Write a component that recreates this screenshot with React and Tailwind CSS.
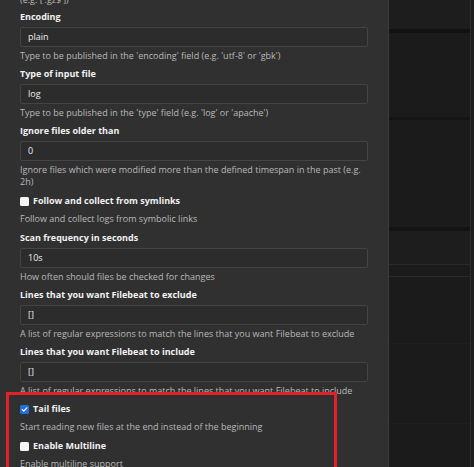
import React from "react";

const font = { fontFamily: '"Open Sans", "Noto Sans", sans-serif' };

function Help({ children, className = "" }) {
  return (
    <div className={"text-[9px] leading-[12px] text-[#b9b9b9] " + className}>
      {children}
    </div>
  );
}

function Field({ label, value, help, className = "mb-[5px]" }) {
  return (
    <div className={className}>
      <div className="text-[9px] leading-[14px] font-bold text-[#f2f2f2] mb-[3px]">{label}</div>
      <div className="h-[20px] rounded-[2px] border border-[#444444] bg-[#2c2c2c] px-[7px] flex items-center text-[9px] text-[#eeeeee]">
        {value}
      </div>
      <Help className="mt-[3px]">{help}</Help>
    </div>
  );
}

function Check({ label, help, checked, className = "" }) {
  return (
    <div className={className}>
      <div className="h-[16px] flex items-center gap-[4px]">
        {checked ? (
          <span className="w-[9px] h-[9px] rounded-[1.5px] bg-[#1f6fe0] flex items-center justify-center">
            <svg width="7" height="7" viewBox="0 0 10 10">
              <path d="M1.8 5.2 L4 7.3 L8.3 2.6" fill="none" stroke="#ffffff" strokeWidth="1.8" strokeLinecap="round" strokeLinejoin="round" />
            </svg>
          </span>
        ) : (
          <span className="w-[9px] h-[9px] rounded-[1.5px] bg-[#f4f4f4]" />
        )}
        <span className="text-[9px] font-bold text-[#f2f2f2]">{label}</span>
      </div>
      <Help className="mt-[4px]">{help}</Help>
    </div>
  );
}

export default function App() {
  return (
    <div style={font} className="w-[474px] h-[467px] overflow-hidden flex bg-[#1b1b1b]">
      <div className="w-[389px] shrink-0 h-full bg-[#303030] border-r border-[#3c3c3c] px-[20px] overflow-hidden">
        <Help className="-mt-[6px] mb-[4px]">(e.g. ['.gz$'])</Help>
        <Field label="Encoding" value="plain" help="Type to be published in the 'encoding' field (e.g. 'utf-8' or 'gbk')" />
        <Field label="Type of input file" value="log" help="Type to be published in the 'type' field (e.g. 'log' or 'apache')" />
        <Field
          label="Ignore files older than"
          value="0"
          help="Ignore files which were modified more than the defined timespan in the past (e.g. 2h)"
        />
        <Check className="mb-[6px]" label="Follow and collect from symlinks" help="Follow and collect logs from symbolic links" />
        <Field label="Scan frequency in seconds" value="10s" help="How often should files be checked for changes" />
        <Field
          label="Lines that you want Filebeat to exclude"
          value="[]"
          help="A list of regular expressions to match the lines that you want Filebeat to exclude"
        />
        <Field
          className=""
          label="Lines that you want Filebeat to include"
          value="[]"
          help="A list of regular expressions to match the lines that you want Filebeat to include"
        />
        <div className="relative -ml-[14px] w-[331px] border-[3px] border-[#e3212b] bg-[#303030] pl-[11px] pt-[6px] pb-[30px] -mt-[5px]">
          <Check checked className="mb-[5px]" label="Tail files" help="Start reading new files at the end instead of the beginning" />
          <Check label="Enable Multiline" help="Enable multiline support" />
        </div>
      </div>
      <div className="w-[81px] shrink-0 h-full flex flex-col bg-[#1b1b1b]">
        <div className="h-[29px] bg-[#1d1d1d]" />
        <div className="h-[4px] bg-[#121212]" />
        <div className="h-[84px]" />
        <div className="h-[3px] bg-[#151515]" />
        <div className="h-[107px]" />
        <div className="h-[4px] bg-[#141414]" />
        <div className="h-[34px] bg-[#1d1d1d] border-b border-[#2a2a2a]" />
        <div className="h-[12px] border-b border-[#2a2a2a]" />
        <div className="h-[67px] border-b border-[#1f1f1f]" />
        <div className="h-[80px] border-b border-[#1f1f1f]" />
        <div className="flex-1" />
      </div>
      <div className="w-[1px] shrink-0 h-full bg-[#2e2e2e]" />
      <div className="flex-1 h-full bg-[#1f1f1f]" />
    </div>
  );
}
